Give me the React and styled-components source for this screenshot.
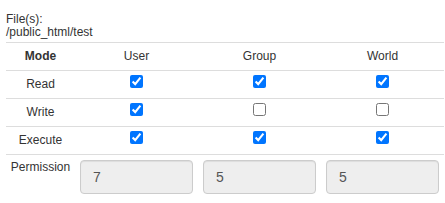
import React from "react";
import styled, { createGlobalStyle } from "styled-components";

const Global = createGlobalStyle`
  html, body { margin: 0; padding: 0; background: #fff; }
  body {
    font-family: "Liberation Sans", Arial, Helvetica, sans-serif;
    font-size: 12px;
    color: #333;
  }
  * { box-sizing: border-box; }
`;

const Wrap = styled.div`
  padding: 13px 1px 0 6px;
  width: 445px;
`;

const FileInfo = styled.div`
  line-height: 12.5px;
  margin-bottom: 4px;
`;

const Grid = styled.div`
  display: flex;
  flex-direction: column;
`;

const Row = styled.div`
  display: grid;
  grid-template-columns: 69px repeat(3, 123px);
  border-top: 1px solid #ddd;
  min-height: 28px;
  align-items: ${(p) => (p.$top ? "start" : "center")};
`;

const Cell = styled.div`
  text-align: center;
  line-height: 17px;
  font-weight: ${(p) => (p.$bold ? 700 : 400)};
  padding-top: ${(p) => p.$pt || 0}px;
`;

const BoxCell = styled.div`
  display: flex;
  justify-content: center;
  align-self: start;
  padding-top: 4px;
`;

const Check = styled.input.attrs({ type: "checkbox" })`
  margin: 0;
  width: 13px;
  height: 13px;
`;

const InputCell = styled.div`
  padding: 5px;
`;

const PermInput = styled.input`
  display: block;
  width: 100%;
  height: 34px;
  padding: 6px 12px;
  font-family: "Liberation Sans", Arial, Helvetica, sans-serif;
  font-size: 14px;
  color: #555;
  background: #eee;
  border: 1px solid #ccc;
  border-radius: 4px;
  box-shadow: inset 0 1px 1px rgba(0, 0, 0, 0.075);
  outline: none;
`;

const rows = [
  { label: "Read", vals: [true, true, true] },
  { label: "Write", vals: [true, false, false] },
  { label: "Execute", vals: [true, true, true] },
];

export default function App() {
  return (
    <>
      <Global />
      <Wrap>
        <FileInfo>
          <div>File(s):</div>
          <div>/public_html/test</div>
        </FileInfo>
        <Grid>
          <Row>
            <Cell $bold>Mode</Cell>
            <Cell>User</Cell>
            <Cell>Group</Cell>
            <Cell>World</Cell>
          </Row>
          {rows.map((r) => (
            <Row key={r.label}>
              <Cell>{r.label}</Cell>
              {r.vals.map((v, i) => (
                <BoxCell key={i}>
                  <Check defaultChecked={v} />
                </BoxCell>
              ))}
            </Row>
          ))}
          <Row $top>
            <Cell $pt={4}>Permission</Cell>
            {["7", "5", "5"].map((v, i) => (
              <InputCell key={i}>
                <PermInput readOnly value={v} />
              </InputCell>
            ))}
          </Row>
        </Grid>
      </Wrap>
    </>
  );
}
